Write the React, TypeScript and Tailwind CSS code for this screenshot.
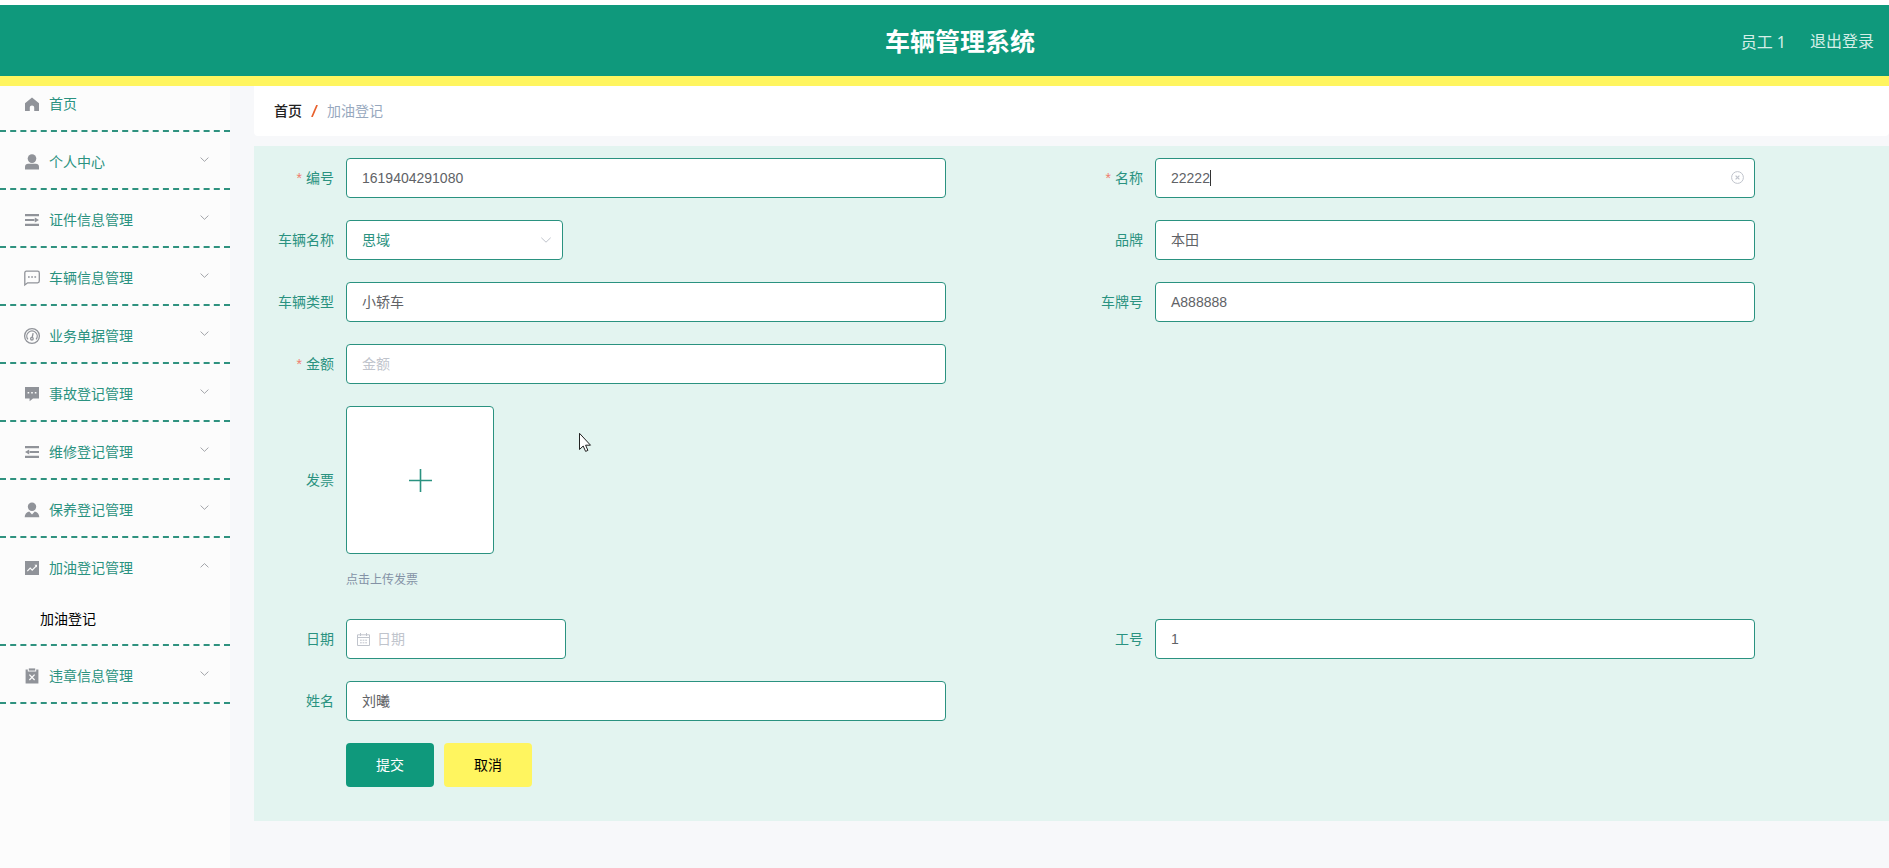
import type { ReactNode } from 'react';

type MenuItem = {
  title: string;
  icon: ReactNode;
  open?: boolean;
  children?: string[];
};

const svgProps = {
  className: 'w-4 h-4 mt-[3px] shrink-0 overflow-visible text-[#909399]',
  viewBox: '0 0 16 16',
  fill: 'currentColor',
};

const menu: MenuItem[] = [
  {
    title: '个人中心',
    icon: (
      <svg {...svgProps}>
        <circle cx="8" cy="4.6" r="4.3" />
        <path d="M1 15.4v-2.6c0-1.8 1.4-3 3.2-3h7.6c1.8 0 3.2 1.2 3.2 3v2.6z" />
      </svg>
    ),
  },
  {
    title: '证件信息管理',
    icon: (
      <svg {...svgProps}>
        <path d="M1 2h14v2.2H1zM1 6.9h9.4v2.2H1zM1 11.8h14V14H1zM10.8 5.6L15 8l-4.2 2.4z" />
      </svg>
    ),
  },
  {
    title: '车辆信息管理',
    icon: (
      <svg {...svgProps}>
        <path
          d="M2.4 1.2h11.2c1 0 1.7.7 1.7 1.7v8.2c0 1-.7 1.7-1.7 1.7H3.6L.8 15V2.9c0-1 .6-1.7 1.6-1.7z"
          fill="none"
          stroke="currentColor"
          strokeWidth="1.3"
        />
        <path d="M4 6.2h1.7v1.6H4zM7.2 6.2h1.7v1.6H7.2zM10.4 6.2h1.7v1.6h-1.7z" />
      </svg>
    ),
  },
  {
    title: '业务单据管理',
    icon: (
      <svg {...svgProps} fill="none" stroke="currentColor" strokeWidth="1.3">
        <circle cx="8" cy="8" r="7.4" />
        <path d="M3.9 11.4a5.2 5.2 0 1 1 8.2 0" />
        <path d="M8.2 9.5l.9-4.3" />
        <circle cx="7.9" cy="10.7" r="1.3" />
      </svg>
    ),
  },
  {
    title: '事故登记管理',
    icon: (
      <svg {...svgProps}>
        <path
          fillRule="evenodd"
          d="M1 1h14v11.4H9l-3.4 2.8v-2.8H1zM3.6 6v1.6h1.6V6zM7.2 6v1.6h1.6V6zM10.8 6v1.6h1.6V6z"
        />
      </svg>
    ),
  },
  {
    title: '维修登记管理',
    icon: (
      <svg {...svgProps}>
        <path d="M1 2h14v2.2H1zM5.6 6.9H15v2.2H5.6zM1 11.8h14V14H1zM5.2 5.6L1 8l4.2 2.4z" />
      </svg>
    ),
  },
  {
    title: '保养登记管理',
    icon: (
      <svg {...svgProps}>
        <circle cx="8" cy="4.7" r="4.2" />
        <path d="M.7 15.3c0-3 1.7-5 4.5-5.8L8 12.4l2.8-2.9c2.8.8 4.5 2.8 4.5 5.8z" />
      </svg>
    ),
  },
  {
    title: '加油登记管理',
    open: true,
    icon: (
      <svg {...svgProps}>
        <path d="M1 1h14v14H1z" />
        <path d="M3.3 11.2l2.9-3 2 2 4.2-4.4" fill="none" stroke="#fcfcfc" strokeWidth="1.2" />
        <path d="M10.4 4.8H13v2.6z" fill="#fcfcfc" />
      </svg>
    ),
    children: ['加油登记'],
  },
  {
    title: '违章信息管理',
    icon: (
      <svg {...svgProps}>
        <path d="M4.8.4h6.4v2.2H4.8z" />
        <path d="M1.6 1.6h2.2v2h8.4v-2h2.2v13.8H1.6z" />
        <path d="M5.4 6.6l5.2 5.4M10.6 6.6L5.4 12" stroke="#fcfcfc" strokeWidth="1.3" />
      </svg>
    ),
  },
];

function Chevron({ up = false, className = '' }: { up?: boolean; className?: string }) {
  return (
    <svg className={`overflow-visible ${className}`} viewBox="0 0 10 6" fill="none" stroke="currentColor">
      <path d={up ? 'M.3 5.2L5 .7l4.7 4.5' : 'M.3 .7L5 5.2 9.7 .7'} />
    </svg>
  );
}

function Field({ label, required, children }: { label: string; required?: boolean; children: ReactNode }) {
  return (
    <div className="flex w-[809px] mb-[22px]">
      <div className="w-20 pr-3 flex items-center justify-end text-[#2a9280] whitespace-nowrap">
        {required && <span className="mr-1 text-[#f07d6e]">*</span>}
        {label}
      </div>
      {children}
    </div>
  );
}

function TextBox({ value, placeholder, children }: { value?: string; placeholder?: string; children?: ReactNode }) {
  return (
    <div className="w-[600px] h-10 px-[15px] flex items-center bg-white border border-[#2a9280] rounded text-[#606266]">
      {value ? <span>{value}</span> : <span className="text-[#c0c4cc]">{placeholder}</span>}
      {children}
    </div>
  );
}

export default function App() {
  return (
    <div className="relative h-[868px] flex flex-col overflow-hidden bg-[#f7f8fa] text-sm font-['Liberation_Sans','Noto_Sans_CJK_SC',sans-serif]">
      {/* Header */}
      <header className="relative z-10 shrink-0 border-t-[5px] border-white">
        <div className="h-[81px] pt-[3px] grid grid-cols-3 items-center bg-[#0f997c] border-b-[10px] border-[#fff55f]">
          <div />
          <h1 className="pl-[31px] text-center text-[25px] leading-none font-bold text-white">车辆管理系统</h1>
          <div className="pr-[15px] flex items-center justify-end gap-6 text-base text-[#d5eee7]">
            <span className="font-['Noto_Sans','Noto_Sans_CJK_SC',sans-serif]">员工 1</span>
            <span>退出登录</span>
          </div>
        </div>
      </header>

      <div className="flex-1 flex min-h-0">
        {/* Sidebar */}
        <aside className="w-[230px] shrink-0 bg-[#fcfcfc] text-[#2a9280]">
          <div className="-mt-3 h-[58px] pl-6 flex items-center border-b-2 border-dashed border-[#2f927f]">
            <svg {...svgProps}>
              <path d="M8 1.4l7 5.8v7.7h-4.8v-3.4c0-1.3-.9-2.1-2.2-2.1s-2.2.8-2.2 2.1v3.4H1V7.2z" />
            </svg>
            <span className="ml-[9px] pt-1">首页</span>
          </div>
          {menu.map((item) => (
            <div key={item.title} className="border-b-2 border-dashed border-[#2f927f]">
              <div className="h-14 pl-6 pr-[21px] flex items-center">
                {item.icon}
                <span className="ml-[9px] flex-1 pt-[3px]">{item.title}</span>
                <Chevron up={item.open} className="w-[9px] h-[5px] mb-0.5 text-[#909399]" />
              </div>
              {item.children?.map((child) => (
                <div key={child} className="h-[50px] pl-10 flex items-center text-black">
                  {child}
                </div>
              ))}
            </div>
          ))}
        </aside>

        <main className="flex-1 pl-6">
          {/* Breadcrumb */}
          <div className="h-[50px] pl-5 flex items-center bg-white rounded-b">
            <span className="text-[#222] font-medium">首页</span>
            <svg className="mx-[9px] w-[7px] h-3" viewBox="0 0 7 12" stroke="#e8602c" strokeWidth="1.7">
              <path d="M6.1 0L.9 12" />
            </svg>
            <span className="text-[#97a8be]">加油登记</span>
          </div>

          {/* Form */}
          <div className="mt-2.5 h-[675px] pl-3 pt-3 bg-[#e3f4f0]">
            <div className="flex">
              <Field label="编号" required>
                <TextBox value="1619404291080" />
              </Field>
              <Field label="名称" required>
                <TextBox value="22222">
                  <span className="w-px h-4 bg-[#333]" />
                  <svg
                    className="ml-auto -mr-[5px] mb-0.5 w-[13px] h-[13px]"
                    viewBox="0 0 13 13"
                    fill="none"
                    stroke="#c0c4cc"
                  >
                    <circle cx="6.5" cy="6.5" r="5.9" />
                    <path d="M4.6 4.6l3.8 3.8M8.4 4.6L4.6 8.4" strokeWidth="1.2" />
                  </svg>
                </TextBox>
              </Field>
            </div>
            <div className="flex">
              <Field label="车辆名称">
                <div className="w-[217px] h-10 pl-[15px] pr-[11px] flex items-center justify-between bg-white border border-[#2a9280] rounded text-[#2a9280]">
                  <span>思域</span>
                  <Chevron className="w-2.5 h-1.5 text-[#c0c4cc]" />
                </div>
              </Field>
              <Field label="品牌">
                <TextBox value="本田" />
              </Field>
            </div>
            <div className="flex">
              <Field label="车辆类型">
                <TextBox value="小轿车" />
              </Field>
              <Field label="车牌号">
                <TextBox value="A888888" />
              </Field>
            </div>
            <Field label="金额" required>
              <TextBox placeholder="金额" />
            </Field>

            <div className="h-[213px]">
              <div className="flex">
                <div className="w-20 pr-3 flex items-center justify-end text-[#2a9280]">发票</div>
                <div className="w-[148px] h-[148px] flex items-center justify-center bg-white border border-[#2a9280] rounded">
                  <svg className="w-[23px] h-[23px]" viewBox="0 0 23 23" stroke="#2a9280" strokeWidth="1.6">
                    <path d="M0 11.5h23M11.5 0v23" />
                  </svg>
                </div>
              </div>
              <div className="pl-20 pt-[17px] text-xs leading-[18px] text-[#8492a6]">点击上传发票</div>
            </div>

            <div className="flex">
              <Field label="日期">
                <div className="w-[220px] h-10 pl-2.5 flex items-center bg-white border border-[#2a9280] rounded text-[#c0c4cc]">
                  <svg className="w-[13px] h-[13px]" viewBox="0 0 13 13" fill="none" stroke="currentColor">
                    <path d="M.5 1.8h12v10.7H.5zM.5 4.5h12M3.5 0v3M9.5 0v3" />
                    <path d="M3 7.2h7M3 9.8h7" strokeDasharray="1.8 .8" />
                  </svg>
                  <span className="ml-[7px]">日期</span>
                </div>
              </Field>
              <Field label="工号">
                <TextBox value="1" />
              </Field>
            </div>
            <Field label="姓名">
              <TextBox value="刘曦" />
            </Field>

            <div className="pl-20 flex gap-2.5">
              <button className="w-[88px] h-11 rounded bg-[#0f997c] text-white">提交</button>
              <button className="w-[88px] h-11 rounded bg-[#fff55f] text-black">取消</button>
            </div>
          </div>
        </main>
      </div>

      {/* Mouse pointer */}
      <svg
        className="absolute left-[578px] top-[432px] w-[14px] h-[21px] z-20"
        viewBox="0 0 14 21"
        fill="#fff"
        stroke="#222"
        strokeLinejoin="round"
      >
        <path d="M1.5 1.3v16.2l3.7-3.5 2.4 5.4 2.3-1-2.3-5.2h4.9z" />
      </svg>
    </div>
  );
}
